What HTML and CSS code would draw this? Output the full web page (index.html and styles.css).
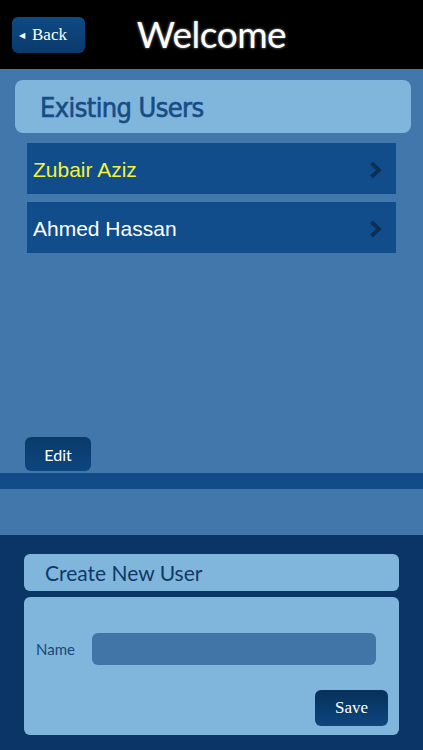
FILE: index.html
```html
<!DOCTYPE html>
<html lang="en">
<head>
    <meta charset="UTF-8">
    <meta name="viewport" content="width=device-width, initial-scale=1.0">
    <title>Welcome</title>
    <link rel="stylesheet" href="styles.css">
</head>
<body>
    <div class="screen">
        <div class="top-bar">
            <button class="back-btn"><span class="back-arrow">&#9664;</span> Back</button>
            <h1 class="title">Welcome</h1>
            <div></div>
        </div>

        <div class="users-panel">
            <div class="panel-header">Existing Users</div>
            <div class="user-list">
                <div class="user-row selected">
                    <span>Zubair Aziz</span>
                    <svg class="chevron" width="13" height="18" viewBox="0 0 13 18"><path d="M2.5 2 L10 9 L2.5 16" fill="none" stroke="#0b2f58" stroke-width="3.8"/></svg>
                </div>
                <div class="user-row">
                    <span>Ahmed Hassan</span>
                    <svg class="chevron" width="13" height="18" viewBox="0 0 13 18"><path d="M2.5 2 L10 9 L2.5 16" fill="none" stroke="#0b2f58" stroke-width="3.8"/></svg>
                </div>
            </div>
            <button class="edit-btn">Edit</button>
        </div>
        <div class="stripe"></div>
        <div class="gap-band"></div>

        <div class="create-panel">
            <div class="create-header">Create New User</div>
            <div class="create-form">
                <div class="field">
                    <label for="name-input">Name</label>
                    <input type="text" id="name-input">
                </div>
                <div class="form-actions">
                    <button class="save-btn">Save</button>
                </div>
            </div>
        </div>
    </div>
</body>
</html>
```

FILE: styles.css
```css
body {
    margin: 0;
    padding: 0;
    background-color: #0b3566;
    font-family: "Liberation Sans", Arial, sans-serif;
}
.screen {
    width: 423px;
    height: 750px;
    display: flex;
    flex-direction: column;
}
.top-bar {
    height: 69px;
    background-color: #000;
    display: grid;
    grid-template-columns: 1fr auto 1fr;
    align-items: center;
    padding: 0 12px;
    box-sizing: border-box;
}
.back-btn {
    justify-self: start;
    width: 73px;
    height: 36px;
    margin-top: 1px;
    border: none;
    border-radius: 6px;
    background: linear-gradient(#0e4a84, #0a3a6c);
    color: #fff;
    font-family: "Liberation Serif", "Times New Roman", serif;
    font-size: 17px;
    padding: 0 0 0 7px;
    text-align: left;
    display: flex;
    align-items: center;
    gap: 7px;
}
.back-arrow {
    font-size: 8px;
}
.title {
    margin: 0 0 2px 0;
    color: #fff;
    font-family: Lato, "Open Sans", sans-serif;
    font-weight: 400;
    font-size: 37px;
    letter-spacing: -0.5px;
    text-shadow: 0 0 3px rgba(255, 255, 255, 0.6);
}
.users-panel {
    height: 404px;
    background-color: #4277ac;
    padding: 11px 12px 2px 15px;
    box-sizing: border-box;
    display: flex;
    flex-direction: column;
}
.panel-header {
    height: 53px;
    background-color: #80b6dc;
    border-radius: 8px;
    color: #174c85;
    font-family: "DejaVu Sans", sans-serif;
    font-stretch: condensed;
    font-size: 27px;
    letter-spacing: -0.6px;
    -webkit-text-stroke: 0.6px #174c85;
    padding: 2px 0 0 25px;
    display: flex;
    align-items: center;
    box-sizing: border-box;
}
.user-list {
    margin: 10px 15px 0 12px;
    display: flex;
    flex-direction: column;
    gap: 8px;
}
.user-row {
    height: 51px;
    background-color: #114d8b;
    color: #fff;
    font-size: 21px;
    padding: 3px 14px 0 6px;
    box-sizing: border-box;
    display: flex;
    align-items: center;
    justify-content: space-between;
}
.user-row.selected {
    color: #f3f33a;
}
.edit-btn {
    margin-top: auto;
    margin-left: 10px;
    width: 66px;
    height: 34px;
    border: none;
    border-radius: 6px;
    background: linear-gradient(#0a3a6a, #0c467f);
    color: #fff;
    font-family: Lato, "Open Sans", sans-serif;
    font-size: 16px;
}
.stripe {
    height: 16px;
    background-color: #114c89;
}
.gap-band {
    height: 46px;
    background-color: #4277ac;
}
.create-panel {
    flex-grow: 1;
    background-color: #0b3566;
    padding: 19px 24px 0 24px;
    display: flex;
    flex-direction: column;
    gap: 6px;
}
.create-header {
    height: 37px;
    background-color: #80b6dc;
    border-radius: 6px;
    color: #0f3966;
    font-family: Lato, "Open Sans", sans-serif;
    font-size: 21px;
    padding-left: 21px;
    display: flex;
    align-items: center;
    box-sizing: border-box;
}
.create-form {
    height: 138px;
    background-color: #80b6dc;
    border-radius: 6px;
    padding: 36px 11px 0 12px;
    box-sizing: border-box;
}
.field {
    display: flex;
    align-items: center;
    padding-right: 12px;
}
.field label {
    width: 56px;
    color: #17497d;
    font-family: Lato, "Open Sans", sans-serif;
    font-size: 15px;
}
.field input {
    flex-grow: 1;
    height: 32px;
    border: none;
    border-radius: 6px;
    background-color: #4175a8;
    padding: 0 8px;
    box-sizing: border-box;
}
.form-actions {
    display: flex;
    justify-content: flex-end;
    margin-top: 25px;
}
.save-btn {
    width: 73px;
    height: 36px;
    border: none;
    border-radius: 6px;
    background: linear-gradient(#07305a, #0c467f);
    color: #fff;
    font-family: "Liberation Serif", "Times New Roman", serif;
    font-size: 17px;
}
```
